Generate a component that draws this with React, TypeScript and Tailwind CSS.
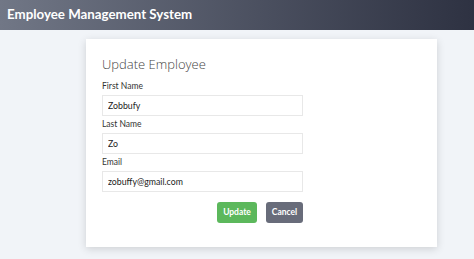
export default function App() {
  return (
    <div className="min-h-[259px] bg-[#f1f4f8] font-['Lato',sans-serif]">
      <header className="h-[30px] flex items-center px-[7px] bg-gradient-to-r from-[#717786] to-[#2e3242]">
        <h1 className="text-white font-bold text-[13.3px]">Employee Management System</h1>
      </header>
      <div className="pl-[86px] pt-[9px]">
        <div className="w-[351px] h-[208px] bg-white shadow-[0_2px_8px_rgba(0,0,0,0.15)] px-[16px] pt-[14px]">
          <h2 className="font-['Open_Sans',sans-serif] text-[13px] font-light text-[#444] leading-[22px]">Update Employee</h2>
          <form className="w-[201px] mt-[3px]" onSubmit={(e) => e.preventDefault()}>
            <Field label="First Name" value="Zobbufy" />
            <Field label="Last Name" value="Zo" />
            <Field label="Email" value="zobuffy@gmail.com" />
            <div className="flex justify-end gap-[9px] mt-[10px]">
              <button className="h-[21px] w-[40px] rounded-[3px] bg-[#5cb85c] text-white text-[8.5px] font-bold">Update</button>
              <button className="h-[21px] w-[37px] rounded-[3px] bg-[#686c7a] text-white text-[8.5px] font-bold">Cancel</button>
            </div>
          </form>
        </div>
      </div>
    </div>
  );
}

function Field({ label, value }: { label: string; value: string }) {
  return (
    <div>
      <label className="block text-[8.5px] text-[#333] leading-[17px]">{label}</label>
      <input
        className="block w-full h-[21px] border border-[#e8e8e8] px-[5px] text-[8.75px] text-[#222] outline-none"
        defaultValue={value}
      />
    </div>
  );
}
